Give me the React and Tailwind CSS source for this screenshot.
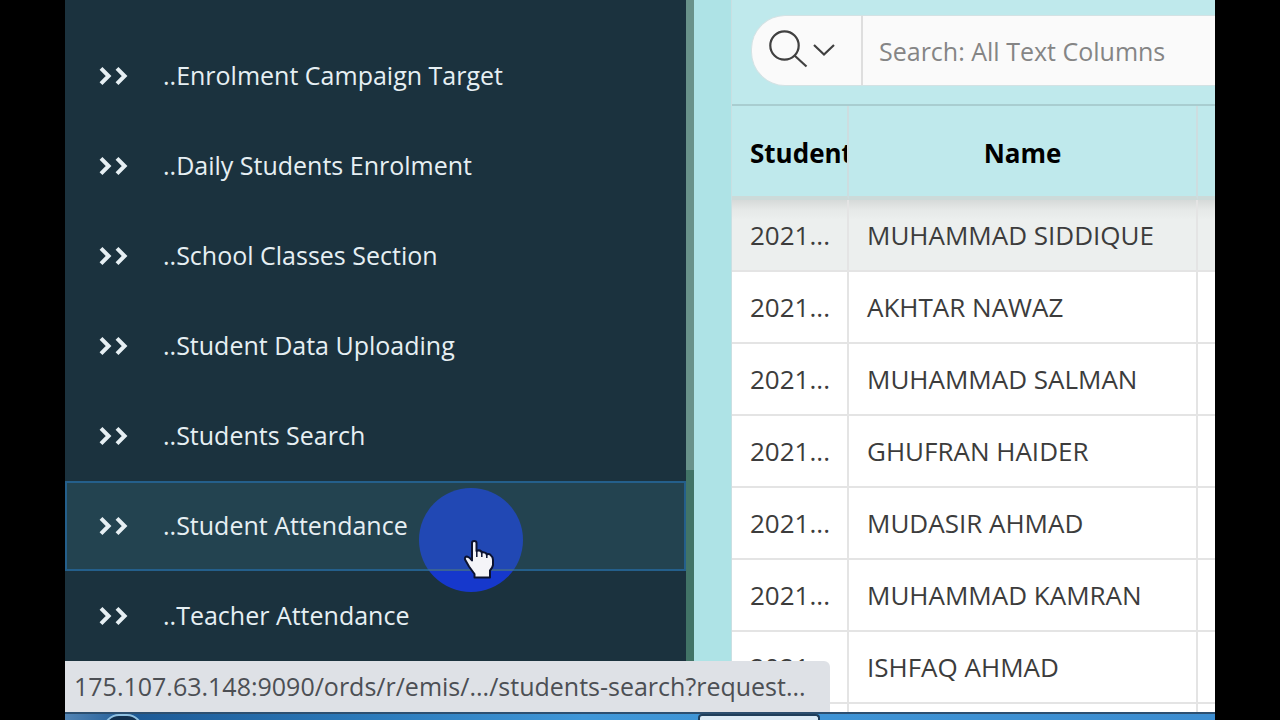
import React, { useState } from 'react';

const MENU_ITEMS = [
  '..Enrolment Campaign Target',
  '..Daily Students Enrolment',
  '..School Classes Section',
  '..Student Data Uploading',
  '..Students Search',
  '..Student Attendance',
  '..Teacher Attendance',
];

const ACTIVE_ITEM = '..Student Attendance';

const STUDENTS = [
  { id: '2021...', name: 'MUHAMMAD SIDDIQUE' },
  { id: '2021...', name: 'AKHTAR NAWAZ' },
  { id: '2021...', name: 'MUHAMMAD SALMAN' },
  { id: '2021...', name: 'GHUFRAN HAIDER' },
  { id: '2021...', name: 'MUDASIR AHMAD' },
  { id: '2021...', name: 'MUHAMMAD KAMRAN' },
  { id: '2021...', name: 'ISHFAQ AHMAD' },
];

const DoubleChevron = () => (
  <svg
    width="30"
    height="20"
    viewBox="0 0 30 20"
    fill="none"
    stroke="currentColor"
    strokeWidth="4"
    aria-hidden="true"
    className="shrink-0"
  >
    <path d="M2 2.4 L9.6 10 L2 17.6" />
    <path d="M18 2.4 L25.6 10 L18 17.6" />
  </svg>
);

const HandCursor = () => (
  <svg width="34" height="42" viewBox="0 0 34 42" aria-hidden="true" className="absolute left-[43px] top-[50px]">
    <path
      d="M10 5 Q10 3 12.2 3 Q14.5 3 14.5 5 V13 Q17 11.5 19.5 13.5 V14.5 Q22 13.5 24.5 15.5 V16.5 Q27.5 15 29 17.5 Q31 19 31 22 V27 Q30.5 30 28 32.5 V39.5 H12.5 V36 L7 28.5 L3 21.5 Q2.5 18.5 5 18.5 Q7.5 19 10 22.5 Z"
      fill="#f4f4f8"
      stroke="#0b1230"
      strokeWidth="2"
      strokeLinejoin="round"
    />
    <path
      d="M14.8 12 V19 M19.8 13.5 V19 M24.8 15.5 V20"
      stroke="#0b1230"
      strokeWidth="1.5"
      fill="none"
    />
  </svg>
);

const MenuItem = ({ label, active, onSelect }) => (
  <li className="relative">
    <a
      href="#"
      onClick={(e) => {
        e.preventDefault();
        onSelect(label);
      }}
      className={`flex h-[90px] items-center gap-[34px] border-2 pl-8 text-[25px] font-medium text-[#e6eff3] ${
        active ? 'border-[#245f8b] bg-[#234350]' : 'border-transparent'
      }`}
    >
      <DoubleChevron />
      <span className="whitespace-nowrap">{label}</span>
    </a>
    {active && (
      <div className="absolute left-[354px] top-[7px] size-[104px] rounded-full bg-[linear-gradient(#2148b4_78%,#3a6296_78%,#3a6296_80%,#1638cc_80%)]">
        <HandCursor />
      </div>
    )}
  </li>
);

const Sidebar = ({ activeItem, onSelect }) => (
  <nav className="w-[54%] shrink-0 overflow-hidden bg-[#1b323e] pt-[31px]">
    <ul>
      {MENU_ITEMS.map((label) => (
        <MenuItem key={label} label={label} active={label === activeItem} onSelect={onSelect} />
      ))}
    </ul>
  </nav>
);

const SearchBar = ({ value, onChange }) => (
  <div className="border-b-2 border-[#a9cdd0] bg-[#bfe9ec] pb-[18px] pl-[19px] pt-[15px]">
    <div className="flex h-[71px] overflow-hidden rounded-l-[34px] border border-r-0 border-[#d3e2e4] bg-[#fafafa]">
      <button
        type="button"
        aria-label="Select columns to search"
        className="flex w-[111px] shrink-0 items-center border-r-2 border-[#dedede] pb-1 pl-4 text-[#404040]"
      >
        <svg width="70" height="44" viewBox="0 0 70 44" fill="none" stroke="currentColor" strokeWidth="2.2">
          <circle cx="16.5" cy="18.5" r="14.2" />
          <path d="M26.5 28.5 L38.5 39.5" />
          <path d="M46 18 L56 27.5 L66 18" />
        </svg>
      </button>
      <input
        type="text"
        aria-label="Search"
        placeholder="Search: All Text Columns"
        value={value}
        onChange={(e) => onChange(e.target.value)}
        className="min-w-0 flex-1 bg-transparent px-4 pt-0.5 text-[25px] text-[#404040] outline-none placeholder:text-[#858585]"
      />
    </div>
  </div>
);

const StudentGrid = ({ rows }) => (
  <table className="w-full table-fixed border-separate border-spacing-0 text-[26px]">
    <colgroup>
      <col className="w-[117px]" />
      <col className="w-[349px]" />
      <col />
    </colgroup>
    <thead>
      <tr className="h-[94px] bg-[#bfe9ec] text-black">
        <th className="overflow-hidden whitespace-nowrap border-b-4 border-r-2 border-b-[#ccdad9] border-r-[#cddde0] pl-[18px] pt-1 text-left font-bold">
          Student
        </th>
        <th className="border-b-4 border-r-2 border-b-[#ccdad9] border-r-[#cddde0] pt-1 text-center font-bold">
          Name
        </th>
        <th className="border-b-4 border-b-[#ccdad9]" />
      </tr>
    </thead>
    <tbody className="text-[#3c3c3c]">
      {rows.map((row, index) => (
        <tr
          key={row.name}
          className={`h-[72px] ${
            index === 0
              ? 'bg-[#ecefee] bg-[linear-gradient(#d6dad9,#e6e9e8_10px,#ecefee_20px)]'
              : 'bg-white'
          }`}
        >
          <td className="overflow-hidden whitespace-nowrap border-b-2 border-r-2 border-[#e4e4e4] pl-[18px]">{row.id}</td>
          <td className="overflow-hidden whitespace-nowrap border-b-2 border-r-2 border-[#e4e4e4] pl-[18px]">{row.name}</td>
          <td className="border-b-2 border-[#e4e4e4]" />
        </tr>
      ))}
      <tr className="h-[72px] bg-white">
        <td className="border-r-2 border-[#e4e4e4]" />
        <td className="border-r-2 border-[#e4e4e4]" />
        <td />
      </tr>
    </tbody>
  </table>
);

const Taskbar = () => (
  <footer className="flex h-2 shrink-0 overflow-hidden border-t-2 border-[#2c4f70] bg-[linear-gradient(90deg,#5284b4,#1d5a96_6%,#2a78b8_25%,#3f97d8_45%,#3c8dd0)]">
    <div className="w-[55%] shrink-0 pl-[38px]">
      <div className="h-8 w-10 rounded-full border-2 border-[#8fc0e0] bg-[#12304e]" />
    </div>
    <div className="h-8 w-[122px] rounded-t border-2 border-b-0 border-[#1f3f5c] bg-[#dcebf6]" />
  </footer>
);

const App = () => {
  const [activeItem, setActiveItem] = useState(ACTIVE_ITEM);
  const [search, setSearch] = useState('');

  return (
    <div className="h-screen bg-black px-[65px] font-['Open_Sans',sans-serif]">
      <div className="flex h-full flex-col overflow-hidden">
        <div className="relative flex min-h-0 flex-1">
          <Sidebar activeItem={activeItem} onSelect={setActiveItem} />

          {/* Sidebar scrollbar */}
          <div className="w-2 shrink-0 bg-[#427467]">
            <div className="h-[66%] bg-[#69928a]" />
          </div>

          <main className="min-w-0 flex-1 overflow-hidden bg-[#aee3e6] pl-[37px]">
            <div className="border-l border-[#c9dfe2]">
              <SearchBar value={search} onChange={setSearch} />
              <StudentGrid rows={STUDENTS} />
            </div>
          </main>

          {/* Link preview */}
          <div className="absolute bottom-0 left-0 flex h-[51px] items-center rounded-tr-md bg-[#dee1e6] pl-[9px] pr-6 text-[25px] text-[#4c4f54]">
            175.107.63.148:9090/ords/r/emis/.../students-search?request...
          </div>
        </div>
        <Taskbar />
      </div>
    </div>
  );
};

export default App;
